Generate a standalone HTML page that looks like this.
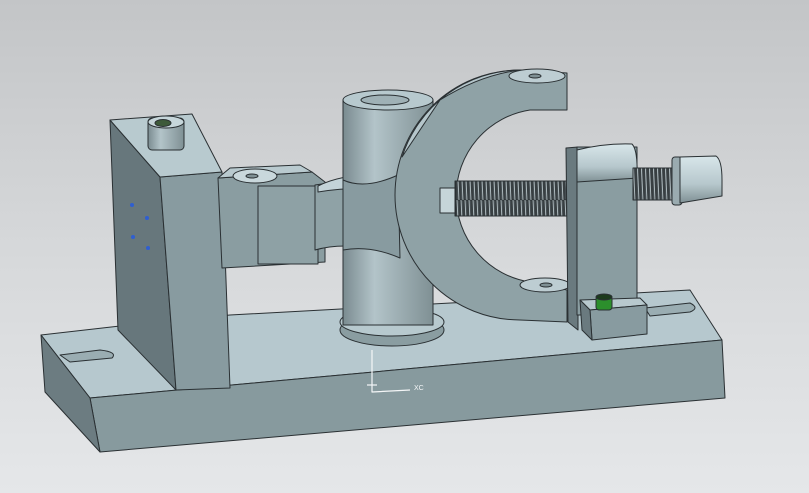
<!DOCTYPE html>
<html><head><meta charset="utf-8"><style>
html,body{margin:0;padding:0;width:809px;height:493px;overflow:hidden}
body{background:linear-gradient(180deg,#c3c5c7 0%,#d6d8da 50%,#e5e7e9 100%)}
svg{display:block}
</style></head><body>
<svg width="809" height="493" viewBox="0 0 809 493" xmlns="http://www.w3.org/2000/svg" stroke="#2a3033" stroke-width="1" stroke-linejoin="round">
<defs>
<linearGradient id="cyl" x1="0" x2="1"><stop offset="0" stop-color="#7a8b90"/><stop offset="0.35" stop-color="#b3c4c9"/><stop offset="1" stop-color="#7f9094"/></linearGradient>
<linearGradient id="head" x1="0" x2="0" y1="0" y2="1"><stop offset="0" stop-color="#d8e6ea"/><stop offset="0.6" stop-color="#b6c7cc"/><stop offset="1" stop-color="#7f9094"/></linearGradient>
<pattern id="thr" width="4" height="40" patternUnits="userSpaceOnUse"><rect width="4" height="40" fill="#464e52"/><line x1="1" y1="0" x2="3" y2="40" stroke="#b4c0c4" stroke-width="0.9"/></pattern>
</defs>
<polygon points="41,335 120,326 230,315 690,290 722,340 90,398" fill="#b6c8ce"/>
<polygon points="90,398 722,340 725,398 100,452" fill="#879a9e"/>
<polygon points="41,335 90,398 100,452 45,392" fill="#6c7c81"/>
<path d="M60,355 L100,350 Q118,352 112,358 L70,362 Z" fill="#9aadb2"/>
<path d="M645,308 L690,303 Q700,308 690,312 L650,316 Z" fill="#9aadb2"/>
<polygon points="110,120 160,177 176,390 118,330" fill="#67777c"/>
<polygon points="160,177 222,172 230,388 176,390" fill="#889ba0"/>
<polygon points="110,120 192,114 222,172 160,177" fill="#b8cacf"/>
<rect x="148" y="118" width="36" height="32" rx="4" fill="url(#cyl)"/>
<ellipse cx="166" cy="122" rx="18" ry="6" fill="#c6d6da"/>
<ellipse cx="163" cy="123" rx="8" ry="3.5" fill="#3d5a3a"/>
<circle cx="132" cy="205" r="2" fill="#2f5fd0" stroke="none"/><circle cx="147" cy="218" r="2" fill="#2f5fd0" stroke="none"/><circle cx="133" cy="237" r="2" fill="#2f5fd0" stroke="none"/><circle cx="148" cy="248" r="2" fill="#2f5fd0" stroke="none"/>
<polygon points="218,178 312,172 325,182 325,262 222,268" fill="#8a9da1"/>
<polygon points="218,178 230,168 300,165 312,172" fill="#b9cacf"/>
<rect x="258" y="186" width="60" height="78" fill="#8ea1a5"/>
<ellipse cx="255" cy="176" rx="22" ry="7" fill="#c9d8dc"/>
<ellipse cx="252" cy="176" rx="6" ry="2" fill="#7f9094"/>
<path d="M315,185 Q350,180 395,172 L398,255 Q350,240 315,250 Z" fill="#8fa2a6"/>
<path d="M318,186 Q345,172 395,175 L390,190 Q355,186 318,192Z" fill="#c3d3d8"/>
<ellipse cx="392" cy="330" rx="52" ry="16" fill="#8a9da1"/>
<ellipse cx="392" cy="322" rx="52" ry="14" fill="#b7c9ce"/>
<rect x="343" y="100" width="90" height="225" fill="url(#cyl)"/>
<ellipse cx="388" cy="100" rx="45" ry="10" fill="#b7c9ce"/>
<ellipse cx="385" cy="100" rx="24" ry="5" fill="#9fb1b6"/>
<path d="M343,180 Q365,190 398,175 L400,258 Q370,245 343,250 Z" fill="#889ba0"/>
<path d="M567,73 L520,70 A125,125 0 0 0 520,320 L567,322 L567,290 L530,282 A87,87 0 0 1 530,110 L567,110 Z" fill="#8fa2a6"/>
<path d="M520,70 A125,125 0 0 0 402,157 L440,100 Q480,75 520,70 Z" fill="#b5c6cb"/>
<ellipse cx="537" cy="76" rx="28" ry="7" fill="#bdcdd2"/>
<ellipse cx="535" cy="76" rx="6" ry="2" fill="#7f9094"/>
<ellipse cx="545" cy="285" rx="25" ry="7" fill="#bdcdd2"/>
<ellipse cx="546" cy="285" rx="6" ry="2" fill="#7f9094"/>
<rect x="440" y="188" width="16" height="25" fill="#c6d5d9"/>
<rect x="455" y="181" width="122" height="35" fill="url(#thr)"/>
<polygon points="566,148 578,147 578,330 568,322" fill="#6a7a7f"/>
<rect x="577" y="147" width="60" height="168" fill="#8a9da1"/>
<path d="M577,150 Q605,143 632,144 Q638,150 637,178 L577,182 Z" fill="url(#head)"/>
<rect x="633" y="168" width="42" height="32" fill="url(#thr)"/>
<rect x="672" y="157" width="10" height="48" rx="3" fill="#9aabb0"/>
<path d="M680,157 L716,156 Q722,160 722,180 L722,196 L680,203 Z" fill="url(#head)"/>
<polygon points="580,300 640,298 647,305 590,310" fill="#b8c9ce"/>
<polygon points="590,310 647,305 647,334 592,340" fill="#889ba0"/>
<polygon points="580,300 590,310 592,340 582,330" fill="#6a7a7f"/>
<rect x="596" y="296" width="16" height="14" rx="3" fill="#2c8f2c"/>
<ellipse cx="604" cy="297" rx="8" ry="3" fill="#1c3a1c"/>
<g stroke="#f4f6f7" stroke-width="1.2" fill="none"><path d="M372,350 L372,392 L410,390"/><path d="M367,385 L377,385"/></g>
<text x="414" y="390" font-family="Liberation Sans, sans-serif" font-size="7" fill="#f4f6f7" stroke="none">XC</text>
</svg>
</body></html>
